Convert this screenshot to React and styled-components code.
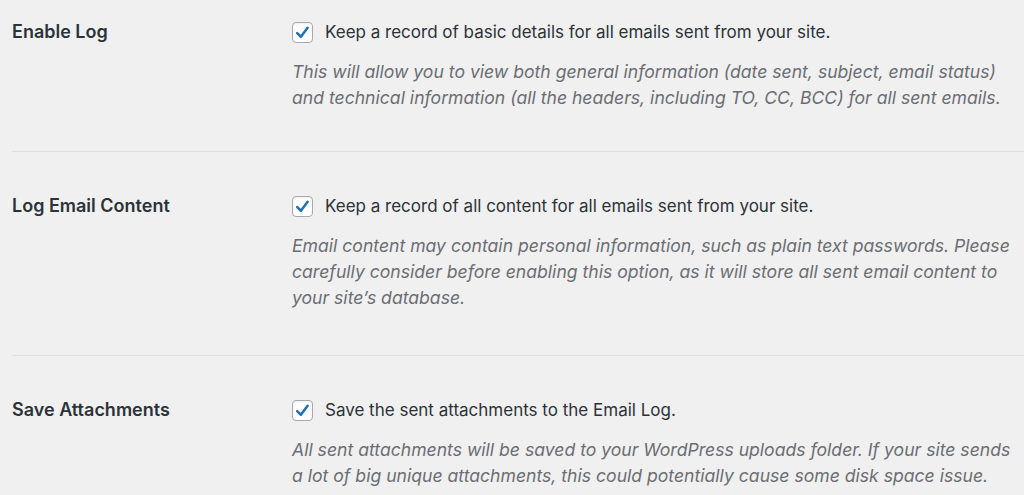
import React from "react";
import styled, { createGlobalStyle } from "styled-components";

const GlobalStyle = createGlobalStyle`
  body {
    margin: 0;
    background: #f0f0f1;
    font-family: Inter, "Noto Sans", sans-serif;
    -webkit-font-smoothing: antialiased;
  }
`;

const Page = styled.div`
  padding-left: 12px;
  overflow: hidden;
`;

const Row = styled.div`
  display: grid;
  grid-template-columns: 280px 1fr;
  padding: ${(p) => p.$pt}px 0 ${(p) => p.$pb}px;
  border-bottom: ${(p) => (p.$last ? "none" : "1px solid #dfdfe1")};
`;

const Label = styled.div`
  font-size: 18px;
  line-height: 24px;
  font-weight: 600;
  color: #2c3338;
`;

const Field = styled.div`
  display: flex;
  flex-direction: column;
`;

const CheckLine = styled.label`
  display: flex;
  align-items: center;
  gap: 12px;
  font-size: 17px;
  line-height: 24px;
  color: #2c3338;
`;

const Box = styled.span`
  width: 21px;
  height: 21px;
  box-sizing: border-box;
  border: 1px solid #a7aaad;
  border-radius: 4px;
  background: #fff;
  box-shadow: inset 0 1px 2px rgba(0, 0, 0, 0.08);
  display: flex;
  align-items: center;
  justify-content: center;
  flex: none;
`;

const Description = styled.p`
  margin: 15px 0 0;
  font-size: 17.6px;
  line-height: 26px;
  font-style: italic;
  color: #6b6e73;
  max-width: 724px;
`;

const Check = () => (
  <Box>
    <svg width="17" height="17" viewBox="0 0 16 16">
      <path d="M3 8.6 L6.5 12 L12.8 3.6" fill="none" stroke="#2271b1" strokeWidth="2.4" strokeLinecap="round" strokeLinejoin="round" />
    </svg>
  </Box>
);

const settings = [
  {
    label: "Enable Log",
    text: "Keep a record of basic details for all emails sent from your site.",
    desc: "This will allow you to view both general information (date sent, subject, email status) and technical information (all the headers, including TO, CC, BCC) for all sent emails.",
    pt: 20,
    pb: 40,
  },
  {
    label: "Log Email Content",
    text: "Keep a record of all content for all emails sent from your site.",
    desc: "Email content may contain personal information, such as plain text passwords. Please carefully consider before enabling this option, as it will store all sent email content to your site\u2019s database.",
    pt: 42,
    pb: 44,
  },
  {
    label: "Save Attachments",
    text: "Save the sent attachments to the Email Log.",
    desc: "All sent attachments will be saved to your WordPress uploads folder. If your site sends a lot of big unique attachments, this could potentially cause some disk space issue.",
    pt: 42,
    pb: 40,
  },
];

export default function App() {
  return (
    <Page>
      <GlobalStyle />
      {settings.map((s, i) => (
        <Row key={s.label} $pt={s.pt} $pb={s.pb} $last={i === settings.length - 1}>
          <Label>{s.label}</Label>
          <Field>
            <CheckLine>
              <Check />
              {s.text}
            </CheckLine>
            <Description>{s.desc}</Description>
          </Field>
        </Row>
      ))}
    </Page>
  );
}
